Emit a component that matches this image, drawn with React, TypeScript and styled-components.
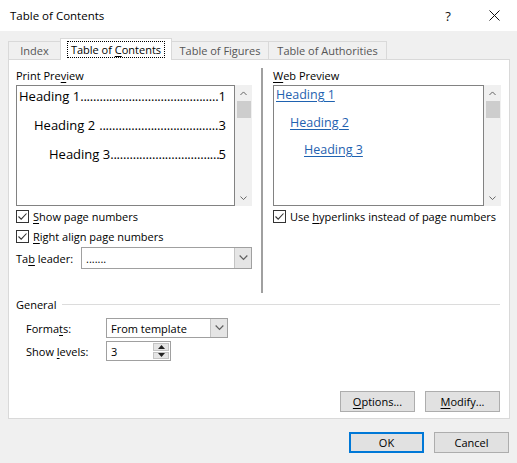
import styled, { createGlobalStyle } from "styled-components";

const GlobalStyle = createGlobalStyle`
  html, body { margin: 0; padding: 0; background: #f0f0f0; }
  body {
    font-family: "Open Sans", "Noto Sans", "Liberation Sans", sans-serif;
    font-size: 11px;
    color: #000;
  }
  * { box-sizing: border-box; }
`;

const Dialog = styled.div`
  width: 517px;
  height: 463px;
  background: #f0f0f0;
  display: flex;
  flex-direction: column;
  overflow: hidden;
`;

const TitleBar = styled.div`
  height: 31px;
  background: #fff;
  display: flex;
  align-items: center;
  padding-left: 10px;
`;

const Title = styled.div`
  flex: 1;
  font-size: 11.5px;
`;

const TitleButton = styled.div`
  width: 46px;
  height: 31px;
  display: flex;
  align-items: center;
  justify-content: center;
  font-size: 13px;
  color: #111;
`;

const Body = styled.div`
  padding: 7px 7px 0 8px;
`;

const TabStrip = styled.div`
  display: flex;
  align-items: flex-end;
  height: 22px;
  margin-bottom: -1px;
  position: relative;
  z-index: 1;
`;

const Tab = styled.div<{ $w: number; $active?: boolean }>`
  width: ${(p) => p.$w}px;
  height: ${(p) => (p.$active ? 22 : 19)}px;
  border: 1px solid #d9d9d9;
  border-bottom: ${(p) => (p.$active ? "none" : "1px solid #d9d9d9")};
  margin-left: -1px;
  background: ${(p) => (p.$active ? "#fff" : "#f0f0f0")};
  color: ${(p) => (p.$active ? "#000" : "#555")};
  display: flex;
  align-items: center;
  justify-content: center;
  &:first-child { margin-left: 0; }
`;

const FocusLabel = styled.span`
  outline: 1px dotted #000;
  padding: 0 3px;
  line-height: 15px;
`;

const Panel = styled.div`
  height: 360px;
  background: #fff;
  border: 1px solid #d9d9d9;
  padding: 8px 9px 6px 7px;
  display: flex;
  flex-direction: column;
`;

const Columns = styled.div`
  display: grid;
  grid-template-columns: 236px 1px 228px;
  column-gap: 10px;
  height: 225px;
`;

const Divider = styled.div`
  background: #a0a0a0;
  margin-left: -1px;
`;

const Column = styled.div`
  display: flex;
  flex-direction: column;
`;

const SectionLabel = styled.div`
  height: 16px;
  line-height: 16px;
  margin-bottom: 1px;
`;

const Key = styled.span`
  text-decoration: underline;
  text-underline-offset: 2px;
`;

const PreviewFrame = styled.div`
  height: 121px;
  display: flex;
`;

const PreviewPane = styled.div<{ $gap: number; $padTop: number }>`
  flex: 1;
  border: 1px solid #828282;
  background: #fff;
  padding: ${(p) => p.$padTop}px 8px 0 2px;
  display: flex;
  flex-direction: column;
  gap: ${(p) => p.$gap}px;
  overflow: hidden;
`;

const TocLine = styled.div<{ $indent: number }>`
  display: flex;
  height: 18px;
  line-height: 18px;
  font-size: 13px;
  padding-left: ${(p) => p.$indent}px;
  white-space: nowrap;
`;

const Leader = styled.span<{ $space?: boolean }>`
  flex: 1;
  overflow: hidden;
  margin-left: ${(p) => (p.$space ? 4 : 0)}px;
  letter-spacing: -0.2px;
  &::before {
    content: "..........................................................................................";
  }
`;

const LinkLine = styled.div<{ $indent: number }>`
  height: 18px;
  line-height: 18px;
  font-size: 12.5px;
  padding-left: ${(p) => p.$indent}px;
  color: #1f62b0;
  text-decoration: underline;
  text-underline-offset: 2px;
`;

const ScrollBar = styled.div`
  width: 17px;
  background: #f0f0f0;
  display: flex;
  flex-direction: column;
  align-items: center;
`;

const ScrollArrow = styled.div`
  height: 16px;
  width: 17px;
  display: flex;
  align-items: center;
  justify-content: center;
`;

const ScrollThumb = styled.div`
  width: 14px;
  height: 17px;
  background: #cdcdcd;
`;

const Spacer = styled.div`
  flex: 1;
`;

const CheckRow = styled.label`
  height: 20px;
  display: flex;
  align-items: center;
  gap: 4px;
`;

const CheckBox = styled.span`
  width: 13px;
  height: 13px;
  border: 1px solid #333;
  background: #fff;
  display: flex;
  align-items: center;
  justify-content: center;
`;

const FieldRow = styled.div<{ $labelW: number; $top: number; $h: number }>`
  display: flex;
  align-items: center;
  height: ${(p) => p.$h}px;
  margin-top: ${(p) => p.$top}px;
  & > :first-child { width: ${(p) => p.$labelW}px; }
`;

const Select = styled.div<{ $w: number; $h: number }>`
  width: ${(p) => p.$w}px;
  height: ${(p) => p.$h}px;
  border: 1px solid #a0a0a0;
  background: #fff;
  display: flex;
  align-items: stretch;
`;

const SelectValue = styled.div`
  flex: 1;
  padding-left: 4px;
  display: flex;
  align-items: center;
`;

const DropButton = styled.div`
  width: 17px;
  background: #e5e5e5;
  border-left: 1px solid #c4c4c4;
  display: flex;
  align-items: center;
  justify-content: center;
`;

const SpinBox = styled.div`
  width: 65px;
  height: 20px;
  border: 1px solid #a0a0a0;
  background: #fff;
  display: flex;
`;

const SpinButtons = styled.div`
  width: 16px;
  margin: 1px;
  display: flex;
  flex-direction: column;
  gap: 1px;
`;

const SpinButton = styled.div`
  flex: 1;
  background: #e5e5e5;
  border: 1px solid #c4c4c4;
  display: flex;
  align-items: center;
  justify-content: center;
`;

const GroupHeader = styled.div`
  display: flex;
  align-items: center;
  gap: 6px;
  height: 16px;
  margin-top: 3px;
  &::after {
    content: "";
    flex: 1;
    height: 1px;
    background: #dcdcdc;
  }
`;

const Group = styled.div`
  padding-left: 10px;
  display: flex;
  flex-direction: column;
`;

const ButtonRow = styled.div<{ $gap: number }>`
  display: flex;
  justify-content: flex-end;
  gap: ${(p) => p.$gap}px;
  margin-top: auto;
`;

const Button = styled.div<{ $default?: boolean }>`
  width: 75px;
  height: 21px;
  background: #e1e1e1;
  border: ${(p) => (p.$default ? "2px solid #0078d7" : "1px solid #adadad")};
  display: flex;
  align-items: center;
  justify-content: center;
`;

const Footer = styled.div`
  display: flex;
  justify-content: flex-end;
  gap: 10px;
  padding: 13px 8px 0 0;
`;

const Check = () => (
  <svg width="11" height="11" viewBox="0 0 11 11">
    <path d="M1.5 5.5 L4.2 8.2 L9.5 2.5" fill="none" stroke="#333" strokeWidth="1.1" />
  </svg>
);

const Chevron = ({ up, size = 8 }: { up?: boolean; size?: number }) => (
  <svg width={size} height={size / 2 + 1} viewBox="0 0 8 5">
    <path
      d={up ? "M0.5 4.5 L4 1 L7.5 4.5" : "M0.5 0.5 L4 4 L7.5 0.5"}
      fill="none"
      stroke="#606060"
      strokeWidth="1.1"
    />
  </svg>
);

const Triangle = ({ up }: { up?: boolean }) => (
  <svg width="7" height="4" viewBox="0 0 7 4">
    <path d={up ? "M0 4 L3.5 0 L7 4 Z" : "M0 0 L3.5 4 L7 0 Z"} fill="#222" />
  </svg>
);

const Scroll = () => (
  <ScrollBar>
    <ScrollArrow>
      <Chevron up size={7} />
    </ScrollArrow>
    <ScrollThumb />
    <Spacer />
    <ScrollArrow>
      <Chevron size={7} />
    </ScrollArrow>
  </ScrollBar>
);

const Checked = ({ children }: { children: React.ReactNode }) => (
  <CheckRow>
    <CheckBox>
      <Check />
    </CheckBox>
    <span>{children}</span>
  </CheckRow>
);

const tocEntries = [
  { label: "Heading 1", page: 1, indent: 0, space: false },
  { label: "Heading 2", page: 3, indent: 15, space: true },
  { label: "Heading 3", page: 5, indent: 30, space: false },
];

export default function App() {
  return (
    <>
      <GlobalStyle />
      <Dialog>
        <TitleBar>
          <Title>Table of Contents</Title>
          <TitleButton>?</TitleButton>
          <TitleButton>
            <svg width="11" height="11" viewBox="0 0 11 11">
              <path d="M0.5 0.5 L10.5 10.5 M10.5 0.5 L0.5 10.5" stroke="#111" strokeWidth="1" />
            </svg>
          </TitleButton>
        </TitleBar>
        <Body>
          <TabStrip>
            <Tab $w={53}>Index</Tab>
            <Tab $w={112} $active>
              <FocusLabel>
                Table of <Key>C</Key>ontents
              </FocusLabel>
            </Tab>
            <Tab $w={98}>Table of Figures</Tab>
            <Tab $w={119}>Table of Authorities</Tab>
          </TabStrip>
          <Panel>
            <Columns>
              <Column>
                <SectionLabel>
                  Print Pre<Key>v</Key>iew
                </SectionLabel>
                <PreviewFrame>
                  <PreviewPane $gap={11} $padTop={1}>
                    {tocEntries.map((e) => (
                      <TocLine key={e.label} $indent={e.indent}>
                        <span>{e.label}</span>
                        <Leader $space={e.space} />
                        <span>{e.page}</span>
                      </TocLine>
                    ))}
                  </PreviewPane>
                  <Scroll />
                </PreviewFrame>
                <Checked>
                  <Key>S</Key>how page numbers
                </Checked>
                <Checked>
                  <Key>R</Key>ight align page numbers
                </Checked>
                <FieldRow $labelW={65} $top={1} $h={22}>
                  <span>
                    Ta<Key>b</Key> leader:
                  </span>
                  <Select $w={171} $h={22}>
                    <SelectValue>.......</SelectValue>
                    <DropButton>
                      <Chevron size={9} />
                    </DropButton>
                  </Select>
                </FieldRow>
              </Column>
              <Divider />
              <Column>
                <SectionLabel>
                  <Key>W</Key>eb Preview
                </SectionLabel>
                <PreviewFrame>
                  <PreviewPane $gap={9.5} $padTop={0}>
                    <LinkLine $indent={0}>Heading 1</LinkLine>
                    <LinkLine $indent={14}>Heading 2</LinkLine>
                    <LinkLine $indent={28}>Heading 3</LinkLine>
                  </PreviewPane>
                  <Scroll />
                </PreviewFrame>
                <Checked>
                  Use <Key>h</Key>yperlinks instead of page numbers
                </Checked>
              </Column>
            </Columns>
            <GroupHeader>General</GroupHeader>
            <Group>
              <FieldRow $labelW={80} $top={6} $h={20}>
                <span>
                  Forma<Key>t</Key>s:
                </span>
                <Select $w={122} $h={20}>
                  <SelectValue>From template</SelectValue>
                  <DropButton>
                    <Chevron size={9} />
                  </DropButton>
                </Select>
              </FieldRow>
              <FieldRow $labelW={80} $top={3} $h={20}>
                <span>
                  Show <Key>l</Key>evels:
                </span>
                <SpinBox>
                  <SelectValue>3</SelectValue>
                  <SpinButtons>
                    <SpinButton>
                      <Triangle up />
                    </SpinButton>
                    <SpinButton>
                      <Triangle />
                    </SpinButton>
                  </SpinButtons>
                </SpinBox>
              </FieldRow>
            </Group>
            <ButtonRow $gap={10}>
              <Button>
                <span>
                  <Key>O</Key>ptions...
                </span>
              </Button>
              <Button>
                <span>
                  <Key>M</Key>odify...
                </span>
              </Button>
            </ButtonRow>
          </Panel>
        </Body>
        <Footer>
          <Button $default>OK</Button>
          <Button>Cancel</Button>
        </Footer>
      </Dialog>
    </>
  );
}
